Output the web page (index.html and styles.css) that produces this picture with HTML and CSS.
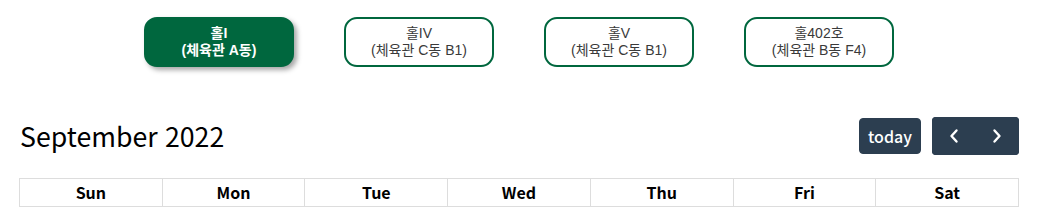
FILE: index.html
```html
<!DOCTYPE html>
<html lang="ko">
<head>
<meta charset="utf-8">
<link rel="stylesheet" href="styles.css">
</head>
<body>
<div class="page">
  <div class="tabs">
    <button class="tab active">홀I<br>(체육관 A동)</button>
    <button class="tab">홀IV<br>(체육관 C동 B1)</button>
    <button class="tab">홀V<br>(체육관 C동 B1)</button>
    <button class="tab">홀402호<br>(체육관 B동 F4)</button>
  </div>
  <div class="toolbar">
    <h2 class="title">September 2022</h2>
    <div class="actions">
      <button class="btn today">today</button>
      <div class="group">
        <button class="btn nav" aria-label="prev"><svg width="12" height="16" viewBox="0 0 12 16"><path d="M8.5 2.5 L3.5 8 L8.5 13.5" fill="none" stroke="#fff" stroke-width="2.4" stroke-linecap="round" stroke-linejoin="round"/></svg></button>
        <button class="btn nav" aria-label="next"><svg width="12" height="16" viewBox="0 0 12 16"><path d="M3.5 2.5 L8.5 8 L3.5 13.5" fill="none" stroke="#fff" stroke-width="2.4" stroke-linecap="round" stroke-linejoin="round"/></svg></button>
      </div>
    </div>
  </div>
  <div class="grid">
    <div class="day">Sun</div>
    <div class="day">Mon</div>
    <div class="day">Tue</div>
    <div class="day">Wed</div>
    <div class="day">Thu</div>
    <div class="day">Fri</div>
    <div class="day">Sat</div>
  </div>
</div>
</body>
</html>
```

FILE: styles.css
```css
html, body {
  margin: 0;
  padding: 0;
  background: #fff;
}
body {
  font-family: "Noto Sans CJK KR", "Noto Sans", sans-serif;
  color: #000;
}
.page {
  width: 1000px;
  margin-left: 19px;
  padding-top: 17px;
}
.tabs {
  display: flex;
  justify-content: center;
  gap: 50px;
}
.tab {
  box-sizing: border-box;
  width: 150px;
  height: 50px;
  border: 2px solid #00673e;
  border-radius: 13px;
  background: #fff;
  color: #3a3a3a;
  font-family: "Liberation Sans", Arial, "Noto Sans CJK KR", sans-serif;
  font-size: 14px;
  line-height: 17px;
  padding: 0;
  text-align: center;
}
.tab.active {
  background: #00673e;
  color: #fff;
  font-weight: bold;
  box-shadow: 3px 3px 5px rgba(0, 0, 0, 0.35);
}
.toolbar {
  display: flex;
  justify-content: space-between;
  align-items: center;
  margin-top: 50px;
  height: 38px;
}
.title {
  margin: 0;
  font-size: 26.7px;
  font-weight: normal;
  line-height: 38px;
  padding-left: 1px;
}
.actions {
  display: flex;
  align-items: center;
  gap: 11px;
}
.btn {
  box-sizing: border-box;
  background: #2c3e50;
  border: 1px solid #2c3e50;
  color: #fff;
  font-family: "Noto Sans CJK KR", "Noto Sans", sans-serif;
  font-size: 16px;
  font-weight: 500;
  padding: 0;
  margin: 0;
}
.today {
  width: 62px;
  height: 36px;
  border-radius: 4px;
  line-height: 32px;
}
.group {
  display: flex;
  height: 38px;
  width: 87px;
  border-radius: 4px;
  overflow: hidden;
}
.nav {
  flex: 1;
  display: flex;
  align-items: center;
  justify-content: center;
  height: 38px;
}
.grid {
  margin-top: 23px;
  display: grid;
  grid-template-columns: repeat(7, 1fr);
  border-top: 1px solid #ddd;
  border-left: 1px solid #ddd;
}
.day {
  border-right: 1px solid #ddd;
  border-bottom: 1px solid #ddd;
  height: 27px;
  line-height: 27px;
  text-align: center;
  font-size: 16px;
  font-weight: bold;
}
```
